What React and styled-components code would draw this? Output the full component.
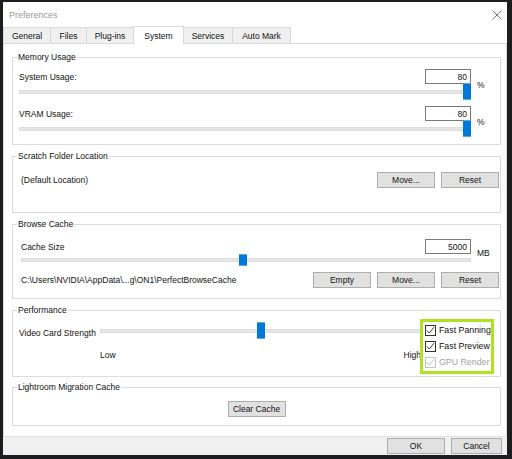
import styled, { createGlobalStyle } from "styled-components";

const Global = createGlobalStyle`
  html, body {
    margin: 0;
    background: #1d1d1f;
  }
  body {
    font-family: "Liberation Sans", Arial, sans-serif;
    font-size: 8.5px;
    color: #111;
  }
`;

const Window = styled.div`
  width: 504px;
  height: 453px;
  margin: 2px 0 0 3px;
  background: #fff;
  display: flex;
  flex-direction: column;
`;

const TitleBar = styled.div`
  height: 25px;
  flex: none;
  display: flex;
  align-items: center;
  justify-content: space-between;
  padding: 0 5px 0 6px;
  color: #9a9a9a;
  font-size: 9px;
`;

const TabBar = styled.div`
  height: 16px;
  flex: none;
  display: flex;
  align-items: flex-end;
  position: relative;
  z-index: 1;
`;

const Tab = styled.div`
  width: ${p => p.$w}px;
  height: ${p => (p.$active ? 18 : 16)}px;
  margin-bottom: ${p => (p.$active ? -1 : 0)}px;
  margin-left: -1px;
  box-sizing: border-box;
  border: 1px solid #d9d9d9;
  border-bottom: none;
  background: ${p => (p.$active ? "#fff" : "#f0f0f0")};
  display: flex;
  align-items: center;
  justify-content: center;
  padding-top: ${p => (p.$active ? 0 : 1)}px;
  &:first-child {
    margin-left: 0;
  }
`;

const Panel = styled.div`
  flex: 1;
  border: 1px solid #d9d9d9;
  border-bottom: none;
  background: #fff;
  padding: 13px 5px 0 8px;
  display: flex;
  flex-direction: column;
`;

const GroupBox = styled.div`
  height: ${p => p.$h}px;
  margin-top: ${p => p.$mt || 0}px;
  box-sizing: border-box;
  border: 1px solid #dcdcdc;
  flex: none;
`;

const Legend = styled.div`
  width: fit-content;
  margin: -6px 0 0 4px;
  padding: 0 1px;
  line-height: 11px;
  background: #fff;
`;

const SliderBlock = styled.div`
  display: grid;
  grid-template-columns: 1fr 22px;
  column-gap: 6px;
  margin-top: ${p => p.$mt}px;
  padding: 0 1px 0 ${p => p.$pl}px;
`;

const TopLine = styled.div`
  height: 15px;
  display: flex;
  align-items: center;
  justify-content: space-between;
`;

const Unit = styled.div`
  line-height: 11px;
  padding-top: ${p => p.$pt}px;
`;

const NumInput = styled.input`
  width: 46px;
  height: 15px;
  box-sizing: border-box;
  border: 1px solid #7a7a7a;
  padding: 0 3px;
  margin: 0;
  text-align: right;
  font-family: inherit;
  font-size: 8.5px;
  color: #111;
  background: #fff;
  outline: none;
`;

const SliderArea = styled.div`
  position: relative;
  height: ${p => p.$h}px;
  margin-top: ${p => p.$mt || 0}px;
  display: flex;
  align-items: center;
`;

const Rail = styled.div`
  width: 100%;
  height: 4px;
  box-sizing: border-box;
  background: #e6e6e6;
  border: 1px solid #dddddd;
`;

const Thumb = styled.div`
  position: absolute;
  top: 0;
  bottom: 0;
  width: 8px;
  left: calc((100% - 8px) * ${p => p.$value / 100});
  background: #0078d7;
  box-shadow: inset 0 1px 0 #5aa7e6, inset 0 -1px 0 #5aa7e6;
`;

const Row = styled.div`
  display: flex;
  align-items: center;
  gap: 6px;
  margin-top: ${p => p.$mt}px;
  padding: 0 1px 0 8px;
`;

const RowText = styled.div`
  flex: 1;
`;

const Button = styled.div`
  width: ${p => p.$w || 58}px;
  height: 16px;
  box-sizing: border-box;
  border: 1px solid #adadad;
  background: #e1e1e1;
  display: flex;
  align-items: center;
  justify-content: center;
  flex: none;
`;

const PerfBody = styled.div`
  display: flex;
  align-items: flex-start;
  margin-top: 3px;
  padding: 0 6px 0 6px;
`;

const PerfSlider = styled.div`
  flex: 1;
  display: grid;
  grid-template-columns: 81px 1fr;
  margin-top: 3px;
`;

const PerfLabel = styled.div`
  line-height: 11px;
  padding-top: 6px;
`;

const Scale = styled.div`
  grid-column: 2;
  display: flex;
  justify-content: space-between;
  line-height: 11px;
  margin-top: 11px;
`;

const CheckGroup = styled.div`
  width: 74px;
  height: 55px;
  box-sizing: border-box;
  border: 3px solid #aee31f;
  padding-left: 2px;
  display: flex;
  flex-direction: column;
  flex: none;
  margin-left: -1px;
  background: #fff;
  position: relative;
`;

const CheckRow = styled.div`
  height: 16px;
  display: flex;
  align-items: center;
  gap: 3px;
  white-space: nowrap;
  color: ${p => (p.$disabled ? "#a3a3a3" : "#111")};
  font-size: 8.8px;
`;

const Box = styled.span`
  width: 11px;
  height: 11px;
  flex: none;
  box-sizing: border-box;
  border: 1px solid ${p => (p.$disabled ? "#c4c4c4" : "#333")};
  display: flex;
  align-items: center;
  justify-content: center;
  background: #fff;
`;

const Center = styled.div`
  display: flex;
  justify-content: center;
  margin-top: 8px;
`;

const Footer = styled.div`
  height: 19px;
  flex: none;
  box-sizing: border-box;
  border-top: 1px solid #dfdfdf;
  background: #f0f0f0;
  display: flex;
  justify-content: flex-end;
  gap: 6px;
  padding: 1px 5px 0 0;
`;

const tabs = [
  ["General", 48],
  ["Files", 37],
  ["Plug-ins", 48],
  ["System", 51],
  ["Services", 50],
  ["Auto Mark", 59],
];

const Check = ({ label, disabled }) => (
  <CheckRow $disabled={disabled}>
    <Box $disabled={disabled}>
      <svg width="9" height="9" viewBox="0 0 9 9">
        <polyline
          points="1,4.5 3.3,7 8,1.2"
          fill="none"
          stroke={disabled ? "#c4c4c4" : "#333"}
          strokeWidth="1"
        />
      </svg>
    </Box>
    {label}
  </CheckRow>
);

const MemSlider = ({ label, value, mt }) => (
  <SliderBlock $mt={mt} $pl={6}>
    <div>
      <TopLine>
        <span>{label}</span>
        <NumInput readOnly value={value} />
      </TopLine>
      <SliderArea $h={17} $mt={-1}>
        <Rail />
        <Thumb $value={100} />
      </SliderArea>
    </div>
    <Unit $pt={11}>%</Unit>
  </SliderBlock>
);

export default function App() {
  return (
    <>
      <Global />
      <Window>
        <TitleBar>
          <span>Preferences</span>
          <svg width="10" height="10" viewBox="0 0 10 10">
            <path d="M0.5 0.5 L9.5 9.5 M9.5 0.5 L0.5 9.5" stroke="#7a7a7a" strokeWidth="1" />
          </svg>
        </TitleBar>
        <TabBar>
          {tabs.map(([name, w]) => (
            <Tab key={name} $w={w} $active={name === "System"}>
              {name}
            </Tab>
          ))}
        </TabBar>
        <Panel>
          <GroupBox $h={88}>
            <Legend>Memory Usage</Legend>
            <MemSlider label="System Usage:" value="80" mt={6} />
            <MemSlider label="VRAM Usage:" value="80" mt={6} />
          </GroupBox>

          <GroupBox $h={57} $mt={11}>
            <Legend>Scratch Folder Location</Legend>
            <Row $mt={10}>
              <RowText>(Default Location)</RowText>
              <Button>Move...</Button>
              <Button>Reset</Button>
            </Row>
          </GroupBox>

          <GroupBox $h={75} $mt={11}>
            <Legend>Browse Cache</Legend>
            <SliderBlock $mt={9} $pl={8}>
              <div>
                <TopLine>
                  <span>Cache Size</span>
                  <NumInput readOnly value="5000" />
                </TopLine>
                <SliderArea $h={12}>
                  <Rail />
                  <Thumb $value={49.4} />
                </SliderArea>
              </div>
              <Unit $pt={9}>MB</Unit>
            </SliderBlock>
            <Row $mt={6}>
              <RowText>C:\Users\NVIDIA\AppData\...g\ON1\PerfectBrowseCache</RowText>
              <Button>Empty</Button>
              <Button>Move...</Button>
              <Button>Reset</Button>
            </Row>
          </GroupBox>

          <GroupBox $h={67} $mt={11}>
            <Legend>Performance</Legend>
            <PerfBody>
              <PerfSlider>
                <PerfLabel>Video Card Strength</PerfLabel>
                <SliderArea $h={17}>
                  <Rail />
                  <Thumb $value={50} />
                </SliderArea>
                <Scale>
                  <span>Low</span>
                  <span>High</span>
                </Scale>
              </PerfSlider>
              <CheckGroup>
                <Check label="Fast Panning" />
                <Check label="Fast Preview" />
                <Check label="GPU Render" disabled />
              </CheckGroup>
            </PerfBody>
          </GroupBox>

          <GroupBox $h={39} $mt={10}>
            <Legend>Lightroom Migration Cache</Legend>
            <Center>
              <Button>Clear Cache</Button>
            </Center>
          </GroupBox>
        </Panel>
        <Footer>
          <Button>OK</Button>
          <Button $w={51}>Cancel</Button>
        </Footer>
      </Window>
    </>
  );
}
